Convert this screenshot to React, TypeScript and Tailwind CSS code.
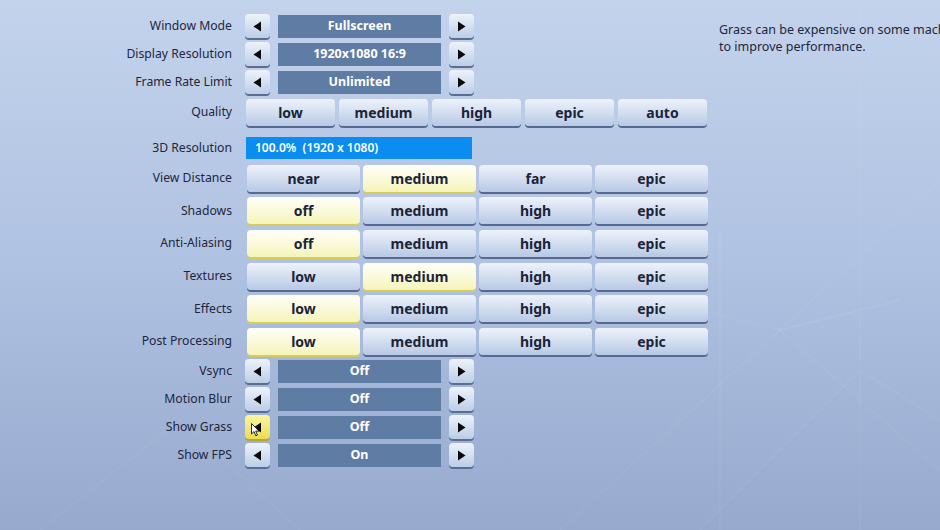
import React from "react"

const font = { fontFamily: '"Noto Sans", "Open Sans", sans-serif' }

function Label({ text }: { text: string }) {
  return (
    <div className="w-[232px] shrink-0 text-right text-[12.2px] text-[#1c2640] leading-none">
      {text}
    </div>
  )
}

function Tri({ dir }: { dir: "l" | "r" }) {
  return (
    <svg width="9" height="11" viewBox="0 0 9 11">
      {dir === "l" ? <path d="M8 0.5 L0.5 5.5 L8 10.5 Z" fill="#0a0a0a" /> : <path d="M1 0.5 L8.5 5.5 L1 10.5 Z" fill="#0a0a0a" />}
    </svg>
  )
}

function ArrowBtn({ dir, hot }: { dir: "l" | "r"; hot?: boolean }) {
  return (
    <div
      className={
        "relative w-[25px] h-[24px] rounded-[4px] flex items-center justify-center " +
        (hot
          ? "bg-gradient-to-b from-[#fbf6a0] to-[#ecdc4c] shadow-[0_2px_0_#b5a63c]"
          : "bg-gradient-to-b from-[#eef3fb] to-[#bccde7] shadow-[0_2px_0_#5a6d93]")
      }
    >
      <Tri dir={dir} />
      {hot && (
        <svg className="absolute left-[6px] top-[8px]" width="9" height="14" viewBox="0 0 9 14">
          <path d="M0.5 0.5 L0.5 11 L3 8.6 L4.8 12.8 L6.4 12.1 L4.7 8.1 L8 8.1 Z" fill="#fff" stroke="#111" strokeWidth="0.9" strokeLinejoin="round" />
        </svg>
      )}
    </div>
  )
}

function ArrowRow({ label, value, hot }: { label: string; value: string; hot?: boolean }) {
  return (
    <div className="flex items-center h-[28px]">
      <Label text={label} />
      <div className="ml-[13px] flex items-center">
        <ArrowBtn dir="l" hot={hot} />
        <div className="ml-[8px] w-[163px] h-[23px] bg-[#5f7ca4] flex items-center justify-center text-white font-bold text-[12.5px]">
          {value}
        </div>
        <div className="ml-[8px]">
          <ArrowBtn dir="r" />
        </div>
      </div>
    </div>
  )
}

function OptBtn({ text, on, w }: { text: string; on?: boolean; w: string }) {
  return (
    <div
      className={
        w +
        " h-[27px] rounded-[4px] flex items-center justify-center font-bold text-[14px] text-[#1b2438] " +
        (on
          ? "bg-gradient-to-b from-[#fffffa] to-[#f6f4b8] shadow-[0_2px_0_#d6cc5a]"
          : "bg-gradient-to-b from-[#eef3fb] to-[#b8c9e5] shadow-[0_2px_0_#566a91]")
      }
    >
      {text}
    </div>
  )
}

function OptRow({ label, sel, opts }: { label: string; sel: number; opts: string[] }) {
  return (
    <div className="flex items-center h-[28px]">
      <Label text={label} />
      <div className="ml-[15px] flex gap-[3px]">
        {opts.map((o, i) => (
          <OptBtn key={o} text={o} on={i === sel} w="w-[113px]" />
        ))}
      </div>
    </div>
  )
}

export default function App() {
  const q = ["low", "medium", "high", "epic", "auto"]
  return (
    <div
      className="relative w-[940px] h-[530px] overflow-hidden bg-gradient-to-b from-[#c3d3ec] via-[#b0c2e2] to-[#97a9cd]"
      style={font}
    >
      <svg className="absolute inset-0" width="940" height="530" viewBox="0 0 940 530">
        <g stroke="#ffffff" strokeOpacity="0.08" strokeWidth="1" fill="none">
          <path d="M560 530 L780 330 L940 470" />
          <path d="M780 330 L940 180" />
          <path d="M660 300 L780 330 L900 300" />
          <path d="M700 530 L860 370 L940 420" />
          <path d="M40 530 L180 420 L300 530" />
          <path d="M860 0 L860 530" />
          <path d="M720 230 L720 530" />
        </g>
      </svg>

      <div className="relative flex">
        <div className="w-[719px] shrink-0 pt-[12px]">
          <ArrowRow label="Window Mode" value="Fullscreen" />
          <ArrowRow label="Display Resolution" value="1920x1080 16:9" />
          <ArrowRow label="Frame Rate Limit" value="Unlimited" />

          <div className="flex items-center h-[29px] mt-[2px]">
            <Label text="Quality" />
            <div className="ml-[14px] flex gap-[4px]">
              {q.map((o) => (
                <OptBtn key={o} text={o} w="w-[89px]" />
              ))}
            </div>
          </div>

          <div className="flex items-center h-[22px] mt-[10px]">
            <Label text="3D Resolution" />
            <div className="ml-[14px] w-[226px] h-[22px] bg-[#0b8cf0] flex items-center pl-[9px] text-white font-semibold text-[12px] whitespace-pre">
              {"100.0%  (1920 x 1080)"}
            </div>
          </div>

          <div className="flex flex-col gap-[4.7px] mt-[5px]">
            <OptRow label="View Distance" sel={1} opts={["near", "medium", "far", "epic"]} />
            <OptRow label="Shadows" sel={0} opts={["off", "medium", "high", "epic"]} />
            <OptRow label="Anti-Aliasing" sel={0} opts={["off", "medium", "high", "epic"]} />
            <OptRow label="Textures" sel={1} opts={["low", "medium", "high", "epic"]} />
            <OptRow label="Effects" sel={0} opts={["low", "medium", "high", "epic"]} />
            <OptRow label="Post Processing" sel={0} opts={["low", "medium", "high", "epic"]} />
          </div>

          <div className="mt-[2px]">
            <ArrowRow label="Vsync" value="Off" />
            <ArrowRow label="Motion Blur" value="Off" />
            <ArrowRow label="Show Grass" value="Off" hot />
            <ArrowRow label="Show FPS" value="On" />
          </div>
        </div>

        <div className="pt-[21px] text-[12.5px] leading-[17px] text-[#1c2640] whitespace-nowrap">
          <p>Grass can be expensive on some machines. Turn it off</p>
          <p>to improve performance.</p>
        </div>
      </div>
    </div>
  )
}
